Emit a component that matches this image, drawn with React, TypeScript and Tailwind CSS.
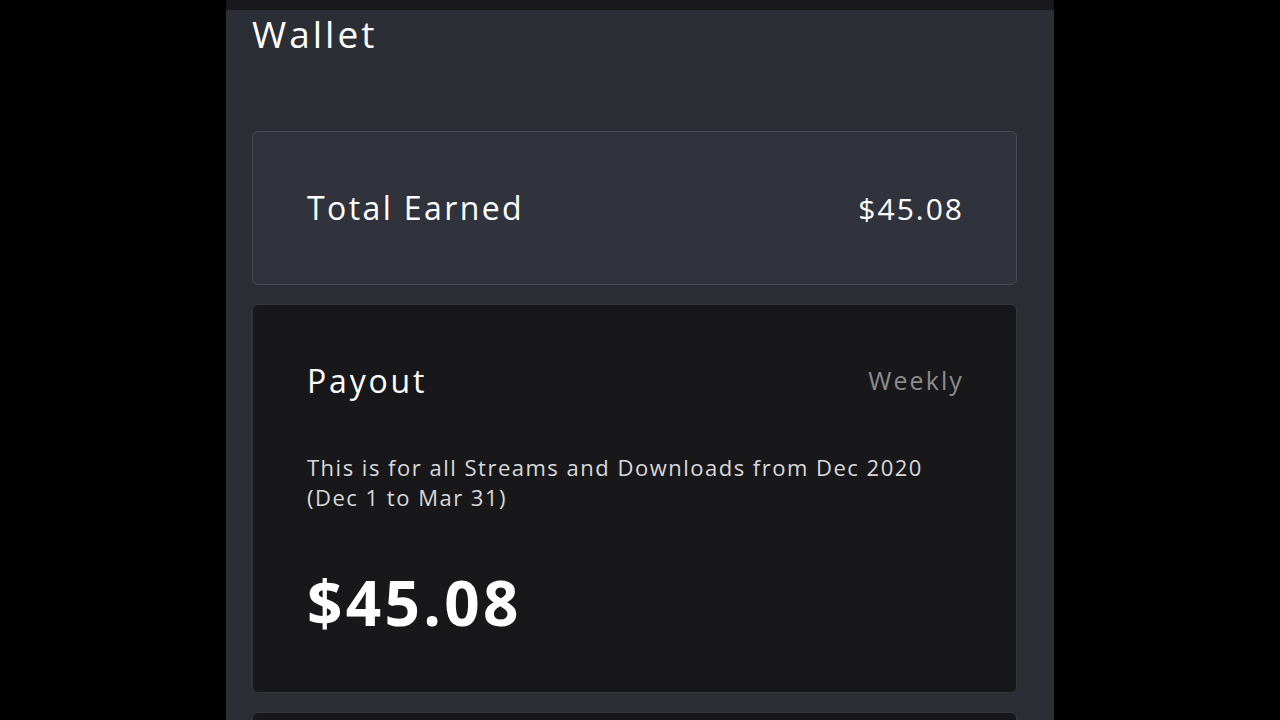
export default function App() {
  return (
    <div className="flex h-[720px] w-[1280px] justify-center overflow-hidden bg-black font-['Open_Sans','Noto_Sans',sans-serif] text-white">
      <div className="flex w-[828px] flex-col bg-[#2b2e35]">
        <div className="h-[10px] shrink-0 bg-[#19191c]" />
        <div className="flex flex-col pl-[26px] pr-[37px]">
          <h1 className="mt-[3px] text-[37px] leading-[42px] tracking-[3px]">Wallet</h1>

          <div className="mt-[76px] flex h-[154px] items-center justify-between rounded-[6px] border border-[#474a52] bg-[#30333b] px-[54px]">
            <span className="text-[32px] tracking-[2.4px]">Total Earned</span>
            <span className="mr-[-2px] text-[30px] tracking-[2px]">$45.08</span>
          </div>

          <div className="mt-[19px] flex h-[389px] flex-col rounded-[6px] border border-[#34363c] bg-[#18181b] px-[54px]">
            <div className="mt-[56px] flex items-center justify-between">
              <span className="text-[32px] leading-[40px] tracking-[2.8px]">Payout</span>
              <span className="mr-[-2px] text-[25px] tracking-[2.1px] text-[#8c8c8f]">Weekly</span>
            </div>
            <p className="mt-[51px] text-[22px] leading-[30px] tracking-[1.5px] text-[#d9d9db]">
              This is for all Streams and Downloads from Dec 2020
              <br />
              (Dec 1 to Mar 31)
            </p>
            <div className="mt-[55px] text-[62px] font-bold leading-[70px] tracking-[3.3px]">$45.08</div>
          </div>

          <div className="mt-[19px] h-[60px] rounded-[6px] border border-[#34363c] bg-[#18181b]" />
        </div>
      </div>
    </div>
  );
}
